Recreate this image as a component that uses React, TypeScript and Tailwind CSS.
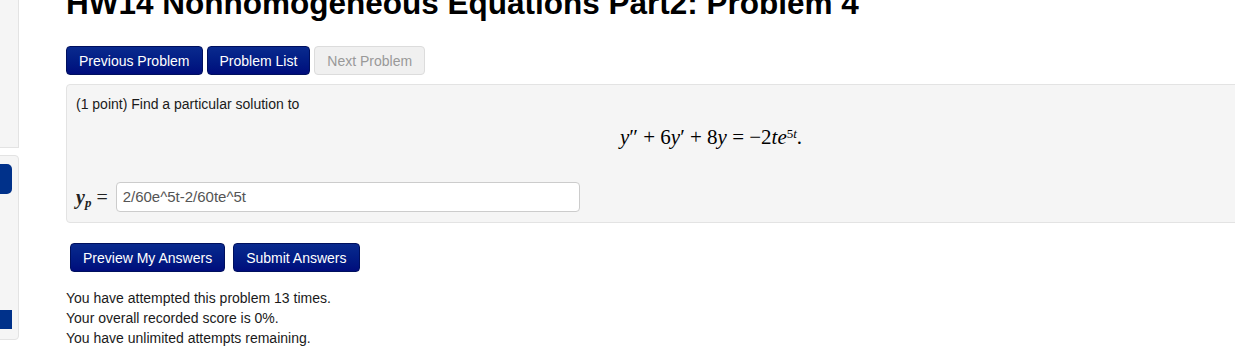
import React from "react";

const btn =
  "h-[29px] px-[12px] rounded-[4px] border border-[#00105e] bg-gradient-to-b from-[#0a2a8e] to-[#000c7c] text-white text-[14px] leading-none";

const serif = { fontFamily: '"Liberation Serif", "DejaVu Serif", serif' };

export default function App() {
  return (
    <div
      className="relative w-[1235px] h-[364px] overflow-hidden bg-white text-[#1a1a1a]"
      style={{ fontFamily: '"Liberation Sans", Arial, sans-serif' }}
    >
      {/* left sidebar */}
      <div className="absolute left-0 top-0 w-[19px] h-[148px] bg-[#f5f5f5] border-r border-b border-[#e3e3e3]" />
      <div className="absolute left-[-6px] top-[155px] w-[25px] h-[185px] bg-[#f5f5f5] border border-[#e3e3e3] rounded-[4px]">
        <div className="absolute left-0 top-[8px] w-[17px] h-[30px] bg-[#00318a] rounded-r-[5px]" />
        <div className="absolute left-0 top-[154px] w-[17px] h-[19px] bg-[#00318a]" />
      </div>

      <div className="pl-[66px] flex flex-col">
        <h1 className="mt-[-15px] text-[31.5px] font-bold leading-[36px] text-black whitespace-nowrap">
          HW14 Nonhomogeneous Equations Part2: Problem 4
        </h1>

        <div className="mt-[25px] flex gap-[4px]">
          <button className={btn}>Previous Problem</button>
          <button className={btn}>Problem List</button>
          <button className="h-[29px] px-[12px] rounded-[4px] border border-[#dcdcdc] bg-[#f0f0f0] text-[#999] text-[14px] leading-none">
            Next Problem
          </button>
        </div>

        <div className="mt-[9px] w-[1200px] h-[139px] bg-[#f5f5f5] border border-[#e3e3e3] rounded-[4px] px-[9px] pt-[9px]">
          <p className="text-[14px] leading-[20px]">(1 point) Find a particular solution to</p>
          <div className="mt-[10px] h-[26px] flex justify-center pl-[90px] whitespace-nowrap" style={serif}>
            <span className="text-[21px] leading-[26px] text-black">
              <i>y</i>″&nbsp;+&nbsp;6<i>y</i>′&nbsp;+&nbsp;8<i>y</i>&nbsp;=&nbsp;−2<i>te</i>
              <sup className="text-[13px]">
                5<i>t</i>
              </sup>
              .
            </span>
          </div>
          <div className="mt-[32px] flex items-center gap-[7px]">
            <span className="text-[20px] leading-none text-[#222] whitespace-nowrap" style={serif}>
              <i className="font-bold">y</i>
              <sub className="text-[13px]">
                <i className="font-bold">p</i>
              </sub>
              &nbsp;=
            </span>
            <div className="ml-[1px] w-[464px] h-[30px] bg-white border border-[#cccccc] rounded-[4px] flex items-center px-[6px] text-[15px] text-[#555]">
              2/60e^5t-2/60te^5t
            </div>
          </div>
        </div>

        <div className="mt-[20px] ml-[4px] flex gap-[8px]">
          <button className={btn}>Preview My Answers</button>
          <button className={btn}>Submit Answers</button>
        </div>

        <div className="mt-[16px] text-[14px] leading-[20px]">
          <p>You have attempted this problem 13 times.</p>
          <p>Your overall recorded score is 0%.</p>
          <p>You have unlimited attempts remaining.</p>
        </div>
      </div>
    </div>
  );
}
